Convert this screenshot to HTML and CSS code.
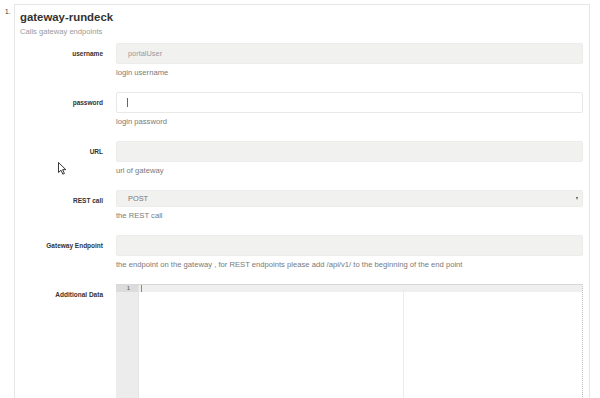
FILE: index.html
```html
<!DOCTYPE html>
<html>
<head>
<meta charset="utf-8">
<link rel="stylesheet" href="styles.css">
</head>
<body>
<div class="item">
  <span class="marker">1.</span>
  <div class="card">
    <h2 class="title">gateway-rundeck</h2>
    <p class="subtitle">Calls gateway endpoints</p>
    <div class="form">
      <div class="row">
        <label class="label">username</label>
        <div class="field">
          <div class="input disabled">portalUser</div>
          <div class="help">login username</div>
        </div>
      </div>
      <div class="row">
        <label class="label">password</label>
        <div class="field">
          <div class="input white"><span class="caret"></span></div>
          <div class="help">login password</div>
        </div>
      </div>
      <div class="row">
        <label class="label">URL</label>
        <div class="field">
          <div class="input disabled"></div>
          <div class="help">url of gateway</div>
        </div>
      </div>
      <div class="row">
        <label class="label">REST call</label>
        <div class="field">
          <div class="select">POST<span class="arrow"></span></div>
          <div class="help">the REST call</div>
        </div>
      </div>
      <div class="row">
        <label class="label">Gateway Endpoint</label>
        <div class="field">
          <div class="input disabled"></div>
          <div class="help">the endpoint on the gateway , for REST endpoints please add /api/v1/ to the beginning of the end point</div>
        </div>
      </div>
      <div class="row last">
        <label class="label">Additional Data</label>
        <div class="field">
          <div class="editor">
            <div class="gutter"><div class="gutter-active">1</div></div>
            <div class="code">
              <div class="active-line"><span class="text-caret"></span></div>
              <div class="print-margin"></div>
            </div>
          </div>
        </div>
      </div>
    </div>
  </div>
</div>
<svg class="pointer" width="10" height="14" viewBox="0 0 10 14">
  <path d="M0.5 0.5 L0.5 10.5 L3 8.2 L4.8 12.2 L6.4 11.5 L4.7 7.6 L7.8 7.6 Z" fill="#fff" stroke="#222" stroke-width="0.9" stroke-linejoin="round"/>
</svg>
</body>
</html>
```
FILE: styles.css
```css
html, body {
  margin: 0;
  padding: 0;
  background: #fff;
  overflow: hidden;
}
body {
  font-family: "Liberation Sans", Arial, sans-serif;
  font-size: 7.5px;
  color: #333;
  height: 398px;
}
.item {
  display: flex;
  align-items: flex-start;
  padding-top: 4px;
}
.marker {
  width: 14px;
  box-sizing: border-box;
  padding-left: 5px;
  font-size: 6.5px;
  line-height: 10px;
  margin-top: 3px;
  color: #333;
}
.card {
  width: 576px;
  box-sizing: border-box;
  border: 1px solid #e6e6e6;
  border-bottom: none;
  padding: 5px 6px 0 5px;
  height: 394px;
  overflow: hidden;
}
.title {
  margin: 0;
  font-size: 11.4px;
  line-height: 14px;
  font-weight: bold;
  color: #333;
}
.subtitle {
  margin: 3px 0 0;
  font-size: 7.6px;
  line-height: 10px;
  color: #9a9a9a;
}
.form {
  margin-top: 6px;
}
.row {
  display: grid;
  grid-template-columns: 83px 1fr;
  column-gap: 13px;
  margin-bottom: 15px;
}
.row.last {
  margin-bottom: 0;
}
.label {
  text-align: right;
  font-weight: bold;
  font-size: 6.5px;
  line-height: 21px;
  color: #333;
}
.input {
  height: 21px;
  box-sizing: border-box;
  border-radius: 2px;
  padding-left: 11px;
  line-height: 21px;
  font-size: 7.4px;
  color: #999;
  position: relative;
}
.disabled {
  background: #f1f1ef;
  border: 1px solid #ececea;
  line-height: 19px;
}
.white {
  background: #fff;
  border: 1px solid #e8e8e8;
}
.caret {
  position: absolute;
  left: 10px;
  top: 5px;
  width: 1px;
  height: 9px;
  background: #666;
}
.select {
  height: 17px;
  box-sizing: border-box;
  border-radius: 2px;
  background: #f1f1ef;
  border: 1px solid #ececea;
  padding-left: 11px;
  line-height: 15px;
  font-size: 7.4px;
  color: #777;
  position: relative;
}
.arrow {
  position: absolute;
  right: 4px;
  top: 6px;
  width: 0;
  height: 0;
  border-left: 1.5px solid transparent;
  border-right: 1.5px solid transparent;
  border-top: 3px solid #555;
}
.help {
  margin-top: 4px;
  font-size: 7.65px;
  line-height: 9px;
  color: #7a7a7a;
  white-space: nowrap;
}
.editor {
  display: flex;
  height: 114px;
  border-top: 1px solid #d8d8d8;
  border-right: 1px dotted #bbb;
}
.gutter {
  width: 22px;
  flex: none;
  background: #ececec;
  border-right: 1px solid #e4e4e4;
}
.gutter-active {
  height: 7px;
  background: #dcdcdc;
  font-size: 6px;
  line-height: 7px;
  text-align: right;
  padding-right: 8px;
  color: #555;
}
.code {
  flex: 1;
  position: relative;
  background: #fff;
}
.active-line {
  height: 7px;
  background: #efefef;
  position: relative;
}
.text-caret {
  position: absolute;
  left: 2px;
  top: 0;
  width: 1px;
  height: 7px;
  background: #888;
}
.print-margin {
  position: absolute;
  top: 0;
  bottom: 0;
  left: 264px;
  width: 1px;
  background: #ececec;
}
.pointer {
  position: absolute;
  left: 58px;
  top: 162px;
}
```
